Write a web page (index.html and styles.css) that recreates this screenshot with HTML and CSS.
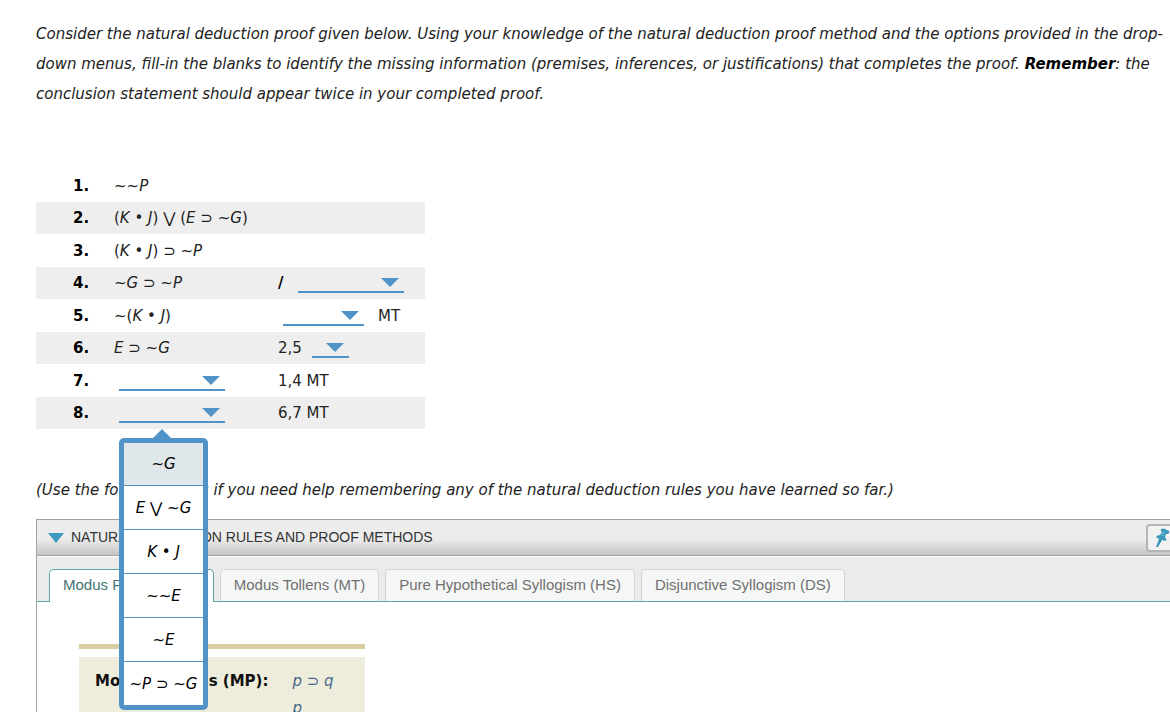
FILE: index.html
```html
<!DOCTYPE html>
<html lang="en">
<head>
    <meta charset="UTF-8">
    <meta name="viewport" content="width=device-width, initial-scale=1.0">
    <title>Natural Deduction Proof</title>
    <link rel="stylesheet" href="styles.css">
</head>
<body>
    <main>
        <p class="intro">Consider the natural deduction proof given below. Using your knowledge of the natural deduction proof method and the options provided in the drop-<br>down menus, fill-in the blanks to identify the missing information (premises, inferences, or justifications) that completes the proof. <b>Remember</b>: the<br>conclusion statement should appear twice in your completed proof.</p>

        <!-- Proof -->
        <table class="proof">
            <tr>
                <th scope="row">1.</th>
                <td class="formula">~~<i>P</i></td>
                <td></td>
            </tr>
            <tr>
                <th scope="row">2.</th>
                <td class="formula">(<i>K</i> • <i>J</i>) ⋁ (<i>E</i> ⊃ ~<i>G</i>)</td>
                <td></td>
            </tr>
            <tr>
                <th scope="row">3.</th>
                <td class="formula">(<i>K</i> • <i>J</i>) ⊃ ~<i>P</i></td>
                <td></td>
            </tr>
            <tr>
                <th scope="row">4.</th>
                <td class="formula">~<i>G</i> ⊃ ~<i>P</i></td>
                <td>
                    <div class="step">
                        <b class="slash">/</b>
                        <span class="blank wide"><select aria-label="Conclusion"><option></option></select></span>
                    </div>
                </td>
            </tr>
            <tr>
                <th scope="row">5.</th>
                <td class="formula">~(<i>K</i> • <i>J</i>)</td>
                <td>
                    <div class="step">
                        <span class="blank medium"><select aria-label="Lines used in step 5"><option></option></select></span>
                        <span class="rule-name">MT</span>
                    </div>
                </td>
            </tr>
            <tr>
                <th scope="row">6.</th>
                <td class="formula"><i>E</i> ⊃ ~<i>G</i></td>
                <td>
                    <div class="step">
                        <span>2,5</span>
                        <span class="blank small"><select aria-label="Rule used in step 6"><option></option></select></span>
                    </div>
                </td>
            </tr>
            <tr>
                <th scope="row">7.</th>
                <td>
                    <div class="step">
                        <span class="blank wide"><select aria-label="Statement 7"><option></option></select></span>
                    </div>
                </td>
                <td>1,4 MT</td>
            </tr>
            <tr>
                <th scope="row">8.</th>
                <td>
                    <div class="step">
                        <span class="blank wide">
                            <select aria-label="Statement 8"><option></option></select>
                            <span class="menu">
                                <button type="button" class="active">~<i>G</i></button>
                                <button type="button"><i>E</i> ⋁ ~<i>G</i></button>
                                <button type="button"><i>K</i> • <i>J</i></button>
                                <button type="button">~~<i>E</i></button>
                                <button type="button">~<i>E</i></button>
                                <button type="button">~<i>P</i> ⊃ ~<i>G</i></button>
                            </span>
                        </span>
                    </div>
                </td>
                <td>6,7 MT</td>
            </tr>
        </table>

        <p class="hint">(Use the following tabs if you need help remembering any of the natural deduction rules you have learned so far.)</p>

        <!-- Rules panel -->
        <section class="panel">
            <header>
                <span class="triangle"></span>
                <h2>NATURAL DEDUCTION RULES AND PROOF METHODS</h2>
                <button type="button" class="pin" aria-label="Pin panel">
                    <svg width="16" height="20" viewBox="0 0 16 20">
                        <path d="M6 1 Q8 0 10 1 L14 3 Q15 5 13 6 L11 6 L10 9 Q12 11 11 13 L7 12 L3 19 L1 19 L4 11 L1 9 Q2 7 5 7 L7 4 Q5 3 6 1 Z" fill="#3d98bd"/>
                        <path d="M9 4 L7 8" stroke="#8cc5da" stroke-width="1"/>
                    </svg>
                </button>
            </header>
            <nav class="tabs">
                <a href="#mp" class="selected">Modus Ponens (MP)</a>
                <a href="#mt">Modus Tollens (MT)</a>
                <a href="#hs">Pure Hypothetical Syllogism (HS)</a>
                <a href="#ds">Disjunctive Syllogism (DS)</a>
            </nav>
            <div class="panel-body" id="mp">
                <div class="rule">
                    <h3>Modus Ponens (MP):</h3>
                    <div class="schema">
                        <div>p ⊃ q</div>
                        <div>p</div>
                    </div>
                </div>
            </div>
        </section>
    </main>
</body>
</html>
```
FILE: styles.css
```css
/* General styles */
* {
    box-sizing: border-box;
}

body {
    margin: 0;
    height: 100vh;
    overflow: hidden;
    background-color: #ffffff;
    color: #222;
    font-family: Verdana, "DejaVu Sans", sans-serif;
    font-size: 15px;
}

main {
    padding: 19px 0 0 36px;
}

.intro,
.hint {
    margin: 0;
    line-height: 30px;
    font-style: italic;
    white-space: nowrap;
}

.intro b {
    color: #000;
}

/* Proof table */
.proof {
    margin: 60px 0 46px;
    width: 389px;
    border-collapse: collapse;
    table-layout: fixed;
    line-height: 20px;
}

.proof tr {
    height: 33px;
}

.proof tr:nth-child(even) {
    height: 32px;
    background-color: #eeeeee;
}

.proof th,
.proof td {
    padding: 0;
    text-align: left;
}

.proof th {
    width: 78px;
    padding-left: 37px;
    color: #000;
}

.proof td:nth-child(2) {
    width: 164px;
}

.step {
    display: flex;
    align-items: center;
}

.slash {
    width: 15px;
    color: #000;
}

.rule-name {
    margin-left: 14px;
}

/* Fill-in drop-downs */
.blank {
    position: relative;
    margin-left: 5px;
    height: 20px;
}

.step span + .blank {
    margin-left: 10px;
}

.wide {
    width: 106px;
}

.medium {
    width: 81px;
}

.small {
    width: 37px;
}

.blank select {
    display: block;
    appearance: none;
    width: 100%;
    height: 20px;
    border: 0;
    border-bottom: 2px solid #5193c6;
    border-radius: 0;
    background: transparent;
}

.blank::after {
    content: "";
    position: absolute;
    top: 5px;
    right: 5px;
    border: 9px solid transparent;
    border-top-color: #5193c6;
    border-bottom: 0;
    pointer-events: none;
}

/* Open menu */
.menu {
    position: absolute;
    top: 35px;
    left: 0;
    z-index: 1;
    display: flex;
    flex-direction: column;
    width: 89px;
    border: 5px solid #5193c6;
    border-radius: 5px;
}

.menu::before {
    content: "";
    position: absolute;
    top: -14px;
    left: 29px;
    border: 9px solid transparent;
    border-bottom-color: #5193c6;
    border-top: 0;
}

.menu button {
    height: 44px;
    padding: 0;
    border: 0;
    border-bottom: 1px solid #5193c6;
    background-color: #ffffff;
    color: #000;
    font: inherit;
    white-space: nowrap;
}

.menu button:first-child,
.menu button:last-child {
    height: 43px;
}

.menu button:last-child {
    border-bottom: 0;
}

.menu .active {
    background-color: #dfe7ea;
}

/* Rules panel */
.panel {
    margin-top: 14px;
    border-top: 1px solid #a3a3a3;
    border-left: 1px solid #a3a3a3;
    font-family: Arial, "Liberation Sans", sans-serif;
}

.panel header {
    display: flex;
    align-items: center;
    height: 36px;
    padding-left: 11px;
    border-bottom: 1px solid #a3a3a3;
    background: linear-gradient(#ececec 55%, #c4c4c4);
}

.triangle {
    border: 8px solid transparent;
    border-top: 10px solid #3d98bd;
    border-bottom: 0;
}

.panel h2 {
    margin: 0 auto 0 7px;
    padding-bottom: 2px;
    color: #333;
    font-size: 14px;
    font-weight: normal;
}

.pin {
    width: 36px;
    height: 28px;
    margin-right: -12px;
    padding: 0 0 0 7px;
    border: 2px solid #b5b5b5;
    border-radius: 4px;
    background-color: #f1f1f1;
    text-align: left;
}

.pin svg {
    display: block;
}

.tabs {
    display: flex;
    gap: 6px;
    padding: 12px 12px 0;
    border-top: 1px solid #ffffff;
    border-bottom: 1px solid #5ba5a3;
    background-color: #ebebeb;
}

.tabs a {
    height: 32px;
    padding: 0 13px;
    border: 1px solid #d3d3d3;
    border-bottom: 0;
    border-radius: 5px 5px 0 0;
    background-color: #f5f7f6;
    color: #707070;
    line-height: 30px;
    text-decoration: none;
}

.tabs .selected {
    height: 33px;
    margin-bottom: -1px;
    border-color: #5ba5a3;
    background-color: #ffffff;
    color: #3f7474;
}

.panel-body {
    padding: 42px 42px 0;
}

.rule {
    display: flex;
    gap: 24px;
    width: 286px;
    padding: 19px 16px 0;
    border-top: 5px solid #d9cea2;
    background: linear-gradient(#ffffff 8px, #eeeddc 8px);
    font-family: Verdana, "DejaVu Sans", sans-serif;
    line-height: 27px;
}

.rule h3 {
    margin: 0;
    color: #111;
    font-size: 15px;
    white-space: nowrap;
}

.schema {
    color: #46698c;
    font-style: italic;
}
```
